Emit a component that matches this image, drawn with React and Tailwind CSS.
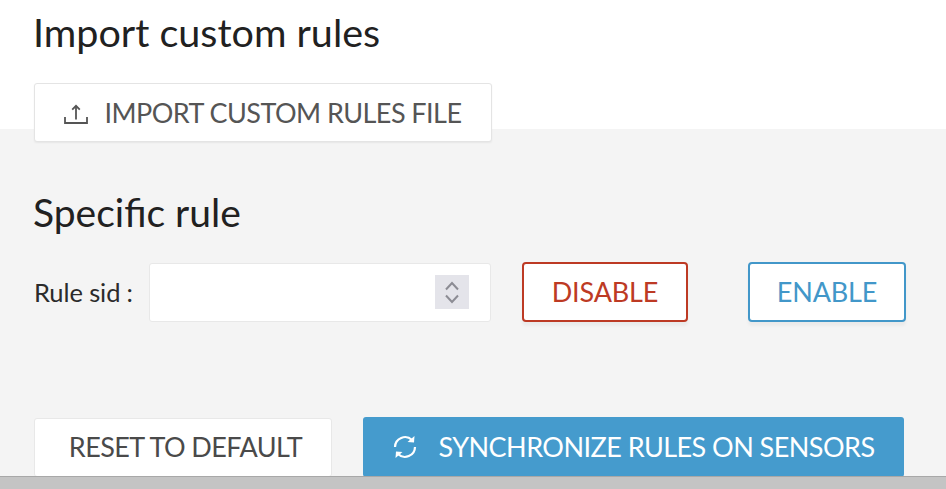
import React from "react";

function UploadIcon() {
  return (
    <svg width="24" height="22" viewBox="0 0 24 22" fill="none" stroke="#555" strokeWidth="1.8" className="shrink-0">
      <path d="M1 14V20H23V14" />
      <path d="M12 16.5V3" />
      <path d="M8.2 6.6 12 2.8 15.8 6.6" />
    </svg>
  );
}

function SyncIcon() {
  return (
    <svg width="26" height="26" viewBox="0 0 26 26" fill="none" stroke="#fff" strokeWidth="2.2" className="shrink-0">
      <path d="M3 13A10 10 0 0 1 20 6" />
      <path d="M23 13A10 10 0 0 1 6 20" />
      <path d="M22.5 2 22 8.5 15.5 8Z" fill="#fff" stroke="none" />
      <path d="M3.5 24 4 17.5 10.5 18Z" fill="#fff" stroke="none" />
    </svg>
  );
}

export default function App() {
  return (
    <div className="w-[946px] h-[489px] overflow-hidden flex flex-col bg-white font-['Lato','Liberation_Sans',sans-serif]">
      <section className="relative z-10 h-[129px] shrink-0 pl-[33px] pt-[8px]">
        <h1 className="text-[39.5px] leading-[48px] text-[#212121] font-normal">Import custom rules</h1>
        <button className="ml-px mt-[27px] w-[458px] h-[59px] pt-[2px] flex items-center justify-center gap-[16px] bg-white border border-[#e4e4e4] rounded-[3px] shadow-[0_1px_2px_rgba(0,0,0,0.06)] text-[27px] tracking-[-0.54px] text-[#555]">
          <UploadIcon />
          <span>IMPORT CUSTOM RULES FILE</span>
        </button>
      </section>

      <section className="h-[347px] shrink-0 bg-[#f4f4f4] pl-[34px] flex flex-col">
        <h2 className="-ml-px mt-[59px] text-[39px] leading-[48px] text-[#212121] font-normal">Specific rule</h2>
        <div className="mt-[26px] flex items-center h-[60px]">
          <label className="w-[115px] text-[25.5px] tracking-[-0.1px] text-[#2b2b2b] whitespace-nowrap">Rule sid&#8201;&#8201;:</label>
          <div className="w-[342px] h-[59px] bg-white border border-[#e8e8e8] rounded-[3px] flex items-center justify-end pr-[21px]">
            <div className="w-[34px] h-[34px] bg-[#e4e4ea] flex flex-col items-center justify-center gap-[3px]">
              <svg width="16" height="10" viewBox="0 0 16 10" fill="none" stroke="#8c8c94" strokeWidth="2"><path d="M2 8.5 8 2l6 6.5" /></svg>
              <svg width="16" height="10" viewBox="0 0 16 10" fill="none" stroke="#8c8c94" strokeWidth="2"><path d="M2 1.5 8 8l6-6.5" /></svg>
            </div>
          </div>
          <button className="ml-[31px] w-[166px] h-[60px] bg-white border-2 border-[#bd3a24] rounded-[4px] shadow-[0_4px_3px_rgba(0,0,0,0.04)] text-[27px] tracking-[-0.15px] text-[#bd3a24]">DISABLE</button>
          <button className="ml-[60px] w-[158px] h-[60px] bg-white border-2 border-[#4297c9] rounded-[4px] shadow-[0_4px_3px_rgba(0,0,0,0.04)] text-[27px] tracking-[-0.15px] text-[#4297c9]">ENABLE</button>
        </div>
        <div className="mt-[95px] flex items-end gap-[31px] h-[60px]">
          <button className="w-[298px] h-[59px] pl-[5px] bg-white border border-[#e8e8e8] rounded-[3px] text-[27px] tracking-[-0.56px] text-[#4a4a4a]">RESET TO DEFAULT</button>
          <button className="w-[541px] h-[60px] bg-[#459bcd] rounded-[3px] flex items-center justify-center gap-[20px] text-[27px] tracking-[-0.54px] text-white">
            <SyncIcon />
            <span>SYNCHRONIZE RULES ON SENSORS</span>
          </button>
        </div>
      </section>

      <div className="flex-1 bg-[#c4c4c4] border-t border-[#a8a8a8]" />
    </div>
  );
}
